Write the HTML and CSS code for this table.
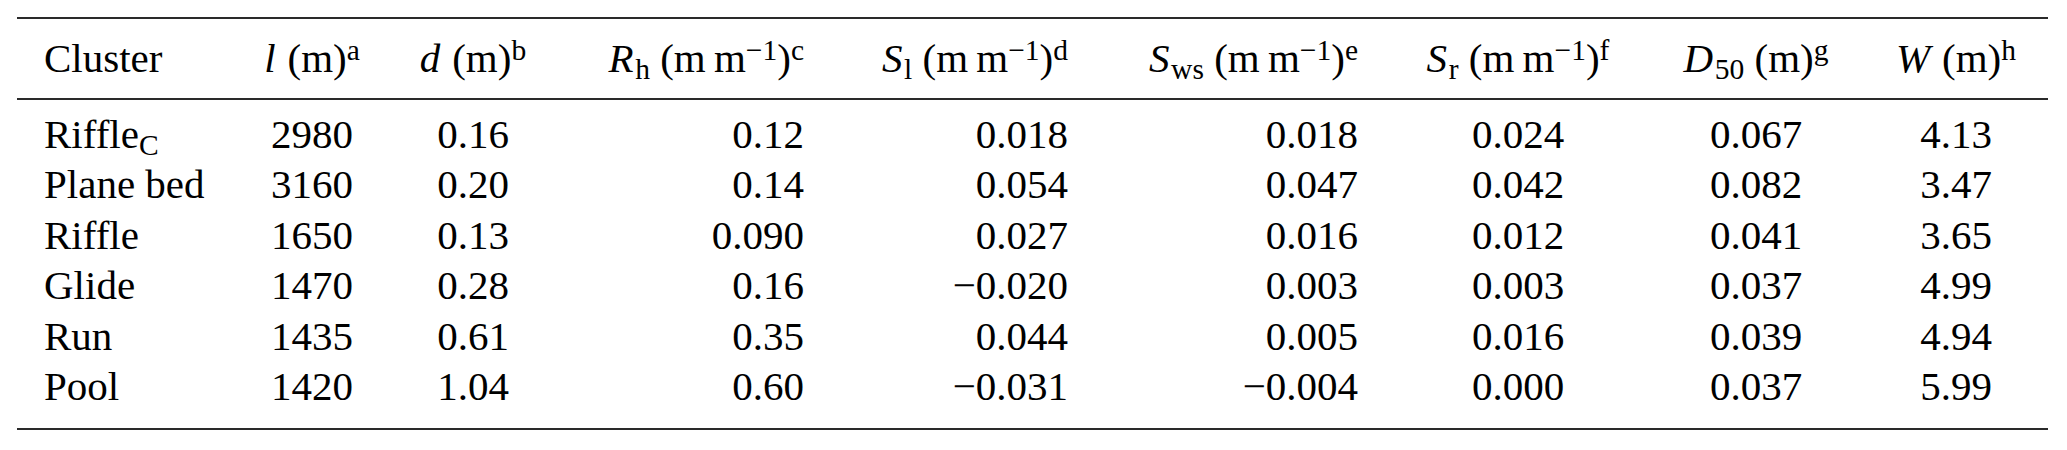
FILE: index.html
```html
<!DOCTYPE html>
<html lang="en">
<head>
<meta charset="utf-8">
<title>Cluster table</title>
<link rel="stylesheet" href="styles.css">
</head>
<body>
<div class="table">
  <div class="head grid">
    <div class="cell c1">Cluster</div>
    <div class="cell c2"><i>l</i> (m)<sup>a</sup></div>
    <div class="cell c3"><i>d</i> (m)<sup>b</sup></div>
    <div class="cell c4"><i>R</i><sub>h</sub> (m&#8201;m<sup>&minus;1</sup>)<sup>c</sup></div>
    <div class="cell c5"><i>S</i><sub>l</sub> (m&#8201;m<sup>&minus;1</sup>)<sup>d</sup></div>
    <div class="cell c6"><i>S</i><sub>ws</sub> (m&#8201;m<sup>&minus;1</sup>)<sup>e</sup></div>
    <div class="cell c7"><i>S</i><sub>r</sub> (m&#8201;m<sup>&minus;1</sup>)<sup>f</sup></div>
    <div class="cell c8"><i>D</i><sub>50</sub> (m)<sup>g</sup></div>
    <div class="cell c9"><i>W</i> (m)<sup>h</sup></div>
  </div>
  <div class="body grid">
    <div class="cell c1">Riffle<sub>C</sub></div><div class="cell c2">2980</div><div class="cell c3">0.16</div><div class="cell c4">0.12</div><div class="cell c5">0.018</div><div class="cell c6">0.018</div><div class="cell c7">0.024</div><div class="cell c8">0.067</div><div class="cell c9">4.13</div>
    <div class="cell c1">Plane bed</div><div class="cell c2">3160</div><div class="cell c3">0.20</div><div class="cell c4">0.14</div><div class="cell c5">0.054</div><div class="cell c6">0.047</div><div class="cell c7">0.042</div><div class="cell c8">0.082</div><div class="cell c9">3.47</div>
    <div class="cell c1">Riffle</div><div class="cell c2">1650</div><div class="cell c3">0.13</div><div class="cell c4">0.090</div><div class="cell c5">0.027</div><div class="cell c6">0.016</div><div class="cell c7">0.012</div><div class="cell c8">0.041</div><div class="cell c9">3.65</div>
    <div class="cell c1">Glide</div><div class="cell c2">1470</div><div class="cell c3">0.28</div><div class="cell c4">0.16</div><div class="cell c5">&minus;0.020</div><div class="cell c6">0.003</div><div class="cell c7">0.003</div><div class="cell c8">0.037</div><div class="cell c9">4.99</div>
    <div class="cell c1">Run</div><div class="cell c2">1435</div><div class="cell c3">0.61</div><div class="cell c4">0.35</div><div class="cell c5">0.044</div><div class="cell c6">0.005</div><div class="cell c7">0.016</div><div class="cell c8">0.039</div><div class="cell c9">4.94</div>
    <div class="cell c1">Pool</div><div class="cell c2">1420</div><div class="cell c3">1.04</div><div class="cell c4">0.60</div><div class="cell c5">&minus;0.031</div><div class="cell c6">&minus;0.004</div><div class="cell c7">0.000</div><div class="cell c8">0.037</div><div class="cell c9">5.99</div>
  </div>
</div>
</body>
</html>
```
FILE: styles.css
```css
html, body {
  margin: 0;
  padding: 0;
  background: #ffffff;
}

body {
  font-family: "Liberation Serif", "Times New Roman", serif;
  font-size: 41px;
  color: #000000;
}

.table {
  margin: 17px 0 0 17px;
  width: 2031px;
  border-top: 2px solid #2a2a2a;
  border-bottom: 2px solid #2a2a2a;
}

.grid {
  display: grid;
  grid-template-columns: 233px 124px 198px 258px 264px 290px 268px 212px 184px;
}

.head {
  padding: 14px 0 15px;
  border-bottom: 2px solid #2a2a2a;
  line-height: 50px;
}

.body {
  padding: 9px 0 17px;
  line-height: 50.4px;
}

.cell {
  white-space: nowrap;
}

.c1 {
  text-align: left;
  padding-left: 27px;
}

.c2, .c3, .c7, .c8, .c9 {
  text-align: center;
}

.c4, .c5, .c6 {
  text-align: right;
  padding-right: 26px;
}

.c8 {
  padding-right: 4px;
}

i {
  font-style: italic;
  padding-right: 0.04em;
}

sup {
  font-size: 0.72em;
  line-height: 0;
  vertical-align: 0.42em;
}

sub {
  font-size: 0.72em;
  line-height: 0;
  vertical-align: -0.25em;
}
```
